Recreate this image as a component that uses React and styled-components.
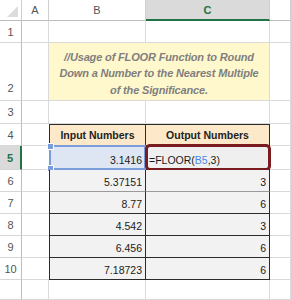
import React from 'react';
import styled, { createGlobalStyle } from 'styled-components';

const GlobalStyle = createGlobalStyle`
  html, body {
    margin: 0;
    padding: 0;
    background: #ffffff;
  }
  body {
    font-family: "Liberation Sans", Arial, sans-serif;
  }
`

const Sheet = styled.div`
  display: grid;
  grid-template-columns: 22px 27px 97px 124px 1fr;
  grid-template-rows: 21px 22px 58px 23px 22px 24px 22px 22px 22px 22px 22px 1fr;
  width: 291px;
  height: 300px;
  overflow: hidden;
  background: #ffffff;
`

const Cell = styled.div`
  position: relative;
  box-sizing: border-box;
  display: flex;
  align-items: flex-end;
  justify-content: ${(p) => p.align || 'flex-start'};
  padding: 0 3px 3px 3px;
  border-right: 1px solid #dadada;
  border-bottom: 1px solid #dadada;
  font-size: 10.5px;
  color: #222;
  white-space: nowrap;
  background: ${(p) => p.bg || 'transparent'};
  grid-column: ${(p) => (p.span ? `span ${p.span}` : 'auto')};
`

const Corner = styled(Cell)`
  background: #ffffff;
  border-right: 1px solid #cfcfcf;
  border-bottom: 1px solid #bdbdbd;
  &::after {
    content: '';
    position: absolute;
    right: 3px;
    bottom: 3px;
    width: 0;
    height: 0;
    border-left: 11px solid transparent;
    border-bottom: 11px solid #dcdcdc;
  }
`

const ColHead = styled(Cell)`
  align-items: center;
  justify-content: center;
  padding: 0;
  color: ${(p) => (p.active ? '#217346' : '#555')};
  font-weight: ${(p) => (p.active ? 'bold' : 'normal')};
  font-size: 11px;
  background: ${(p) => (p.active ? '#dadada' : '#ffffff')};
  border-right: 1px solid #cfcfcf;
  border-bottom: ${(p) => (p.active ? '2px solid #217346' : '1px solid #bdbdbd')};
`

const RowHead = styled(Cell)`
  justify-content: center;
  padding: ${(p) => (p.tall ? '0 0 6px 0' : '0')};
  align-items: ${(p) => (p.tall ? 'flex-end' : 'center')};
  color: ${(p) => (p.active ? '#217346' : '#555')};
  font-weight: ${(p) => (p.active ? 'bold' : 'normal')};
  font-size: 11px;
  background: ${(p) => (p.active ? '#dadada' : '#ffffff')};
  border-right: ${(p) => (p.active ? '2px solid #217346' : '1px solid #bdbdbd')};
  border-bottom: 1px solid #d6d6d6;
`

const Title = styled(Cell)`
  background: #fff8cc;
  flex-direction: column;
  align-items: center;
  justify-content: flex-end;
  padding: 0 2px 2px 2px;
  font-style: italic;
  font-weight: bold;
  font-size: 11px;
  letter-spacing: -0.15px;
  line-height: 16.5px;
  color: #7f7f7f;
`

const TitleLine = styled.span`
  display: block;
`

const TableCell = styled(Cell)`
  background: ${(p) => p.bg || '#f2f2f2'};
  border-right: 1px solid #2b2b2b;
  border-bottom: 1px solid ${(p) => p.line || '#2b2b2b'};
  border-left: ${(p) => (p.first ? '1px solid #2b2b2b' : 'none')};
  border-top: ${(p) => (p.top ? '1px solid #2b2b2b' : 'none')};
  font-size: 10.5px;
  color: #1a1a1a;
`

const TableHead = styled(TableCell)`
  background: #fde9c9;
  font-weight: bold;
  justify-content: center;
  align-items: center;
  padding: 0;
  color: #222;
`

const LeftOfTable = styled(Cell)`
  border-right: none;
`

const Selection = styled.div`
  position: absolute;
  left: -1px;
  top: -1px;
  right: -1px;
  bottom: -1px;
  border: 2px solid #7a9cd9;
  pointer-events: none;
`

const Handle = styled.span`
  position: absolute;
  left: -4px;
  ${(p) => (p.bottom ? 'bottom: -4px;' : 'top: -4px;')}
  width: 5px;
  height: 5px;
  background: #7a9cd9;
  border: 1px solid #ffffff;
`

const Highlight = styled.div`
  position: absolute;
  left: -1px;
  top: -2px;
  right: -2px;
  bottom: -2px;
  border: 3px solid #7a1b1f;
  border-radius: 5px;
  pointer-events: none;
`

const Ref = styled.span`
  color: #4a86e8;
`

const titleLines = [
  '//Usage of FLOOR Function to Round',
  'Down a Number to the Nearest Multiple',
  'of the Significance.',
];

const rows = [
  { n: 6, input: '5.37151', output: '3', line: '#9a9a9a' },
  { n: 7, input: '8.77', output: '6' },
  { n: 8, input: '4.542', output: '3' },
  { n: 9, input: '6.456', output: '6' },
  { n: 10, input: '7.18723', output: '6' },
];

const App = () => {
  return (
    <>
      <GlobalStyle />
      <Sheet>
        <Corner />
        <ColHead>A</ColHead>
        <ColHead>B</ColHead>
        <ColHead active>C</ColHead>
        <ColHead />

        <RowHead>1</RowHead>
        <Cell />
        <Cell />
        <Cell />
        <Cell />

        <RowHead tall>2</RowHead>
        <Cell />
        <Title span={2}>
          {titleLines.map((line) => (
            <TitleLine key={line}>{line}</TitleLine>
          ))}
        </Title>
        <Cell />

        <RowHead>3</RowHead>
        <Cell />
        <Cell />
        <Cell />
        <Cell />

        <RowHead>4</RowHead>
        <LeftOfTable />
        <TableHead first top>Input Numbers</TableHead>
        <TableHead top>Output Numbers</TableHead>
        <Cell />

        <RowHead active>5</RowHead>
        <LeftOfTable />
        <TableCell first bg="#dfe6f3" align="flex-end">
          3.1416
          <Selection>
            <Handle />
            <Handle bottom />
          </Selection>
        </TableCell>
        <TableCell bg="#efefef">
          =FLOOR(<Ref>B5</Ref>,3)
          <Highlight />
        </TableCell>
        <Cell />

        {rows.map((r) => (
          <React.Fragment key={r.n}>
            <RowHead>{r.n}</RowHead>
            <LeftOfTable />
            <TableCell first align="flex-end" line={r.line}>{r.input}</TableCell>
            <TableCell align="flex-end" line={r.line}>{r.output}</TableCell>
            <Cell />
          </React.Fragment>
        ))}

        <RowHead />
        <Cell />
        <Cell />
        <Cell />
        <Cell />
      </Sheet>
    </>
  );
};

export default App;
